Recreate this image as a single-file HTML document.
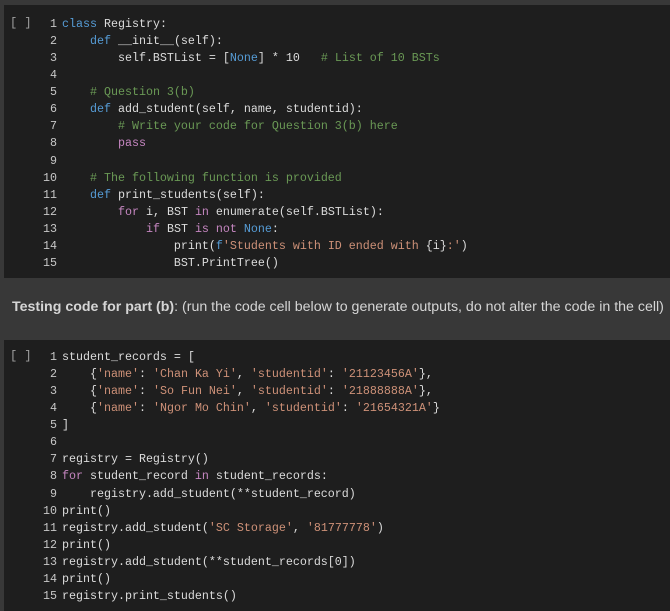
<!DOCTYPE html>
<html><head><meta charset="utf-8"><style>
body{margin:0;width:670px;height:611px;background:#383838;overflow:hidden;position:relative;font-family:"Liberation Mono",monospace;}
.cell{position:absolute;left:4px;right:0;background:#1e1e1e;}
.b{position:absolute;left:10px;color:#a0a0a0;font-size:12px;}
pre{margin:0;position:absolute;left:0;font-family:"Liberation Mono",monospace;font-size:11.67px;line-height:17.07px;color:#dcdcdc;}
.n{display:inline-block;width:57px;text-align:right;color:#c8c8c8;padding-right:5px;}
.k{color:#569cd6}.c{color:#6a9955}.s{color:#ce9178}.p{color:#c586c0}
.t{position:absolute;left:12px;top:299px;font-family:"Liberation Sans",sans-serif;font-size:14.2px;color:#d5d5d5;white-space:nowrap}
</style></head><body>
<div class="cell" style="top:5px;height:273px"></div>
<div class="cell" style="top:340px;height:271px"></div>
<div class="b" style="top:16px">[ ]</div>
<div class="b" style="top:349px">[ ]</div>
<pre style="top:16px"><span class="n">1</span><span class="k">class</span> Registry:
<span class="n">2</span>    <span class="k">def</span> __init__(self):
<span class="n">3</span>        self.BSTList = [<span class="k">None</span>] * 10   <span class="c"># List of 10 BSTs</span>
<span class="n">4</span>
<span class="n">5</span>    <span class="c"># Question 3(b)</span>
<span class="n">6</span>    <span class="k">def</span> add_student(self, name, studentid):
<span class="n">7</span>        <span class="c"># Write your code for Question 3(b) here</span>
<span class="n">8</span>        <span class="p">pass</span>
<span class="n">9</span>
<span class="n">10</span>    <span class="c"># The following function is provided</span>
<span class="n">11</span>    <span class="k">def</span> print_students(self):
<span class="n">12</span>        <span class="p">for</span> i, BST <span class="p">in</span> enumerate(self.BSTList):
<span class="n">13</span>            <span class="p">if</span> BST <span class="p">is not</span> <span class="k">None</span>:
<span class="n">14</span>                print(<span class="k">f</span><span class="s">'Students with ID ended with </span>{i}<span class="s">:'</span>)
<span class="n">15</span>                BST.PrintTree()</pre>
<div class="t"><b>Testing code for part (b)</b>: (run the code cell below to generate outputs, do not alter the code in the cell)</div>
<pre style="top:349px"><span class="n">1</span>student_records = [
<span class="n">2</span>    {<span class="s">'name'</span>: <span class="s">'Chan Ka Yi'</span>, <span class="s">'studentid'</span>: <span class="s">'21123456A'</span>},
<span class="n">3</span>    {<span class="s">'name'</span>: <span class="s">'So Fun Nei'</span>, <span class="s">'studentid'</span>: <span class="s">'21888888A'</span>},
<span class="n">4</span>    {<span class="s">'name'</span>: <span class="s">'Ngor Mo Chin'</span>, <span class="s">'studentid'</span>: <span class="s">'21654321A'</span>}
<span class="n">5</span>]
<span class="n">6</span>
<span class="n">7</span>registry = Registry()
<span class="n">8</span><span class="p">for</span> student_record <span class="p">in</span> student_records:
<span class="n">9</span>    registry.add_student(**student_record)
<span class="n">10</span>print()
<span class="n">11</span>registry.add_student(<span class="s">'SC Storage'</span>, <span class="s">'81777778'</span>)
<span class="n">12</span>print()
<span class="n">13</span>registry.add_student(**student_records[0])
<span class="n">14</span>print()
<span class="n">15</span>registry.print_students()</pre>
</body></html>
